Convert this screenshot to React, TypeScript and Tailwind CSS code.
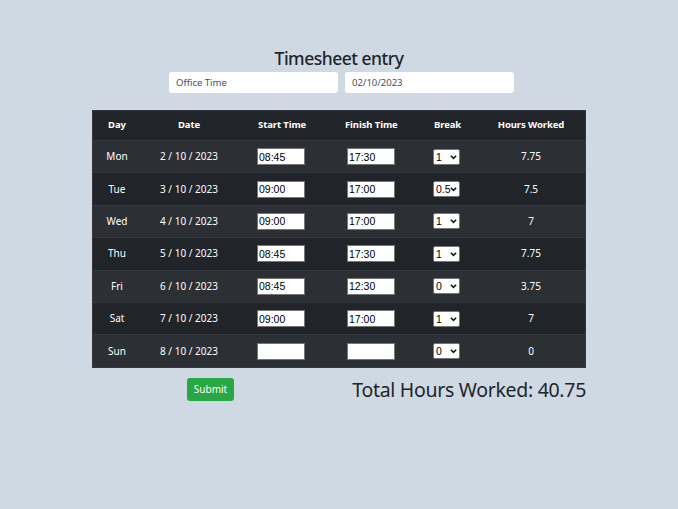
import { useState } from 'react'

interface DayRow {
  day: string
  date: string
  start: string
  finish: string
  brk: string
}

const initialRows: DayRow[] = [
  { day: 'Mon', date: '2 / 10 / 2023', start: '08:45', finish: '17:30', brk: '1' },
  { day: 'Tue', date: '3 / 10 / 2023', start: '09:00', finish: '17:00', brk: '0.5' },
  { day: 'Wed', date: '4 / 10 / 2023', start: '09:00', finish: '17:00', brk: '1' },
  { day: 'Thu', date: '5 / 10 / 2023', start: '08:45', finish: '17:30', brk: '1' },
  { day: 'Fri', date: '6 / 10 / 2023', start: '08:45', finish: '12:30', brk: '0' },
  { day: 'Sat', date: '7 / 10 / 2023', start: '09:00', finish: '17:00', brk: '1' },
  { day: 'Sun', date: '8 / 10 / 2023', start: '', finish: '', brk: '0' }
]

const toMinutes = (t: string): number | null => {
  const m = t.match(/^(\d{1,2}):(\d{2})$/)
  if (!m) return null
  return Number(m[1]) * 60 + Number(m[2])
}

const hoursFor = (row: DayRow): number => {
  const s = toMinutes(row.start)
  const f = toMinutes(row.finish)
  if (s === null || f === null) return 0
  return Math.max(0, (f - s) / 60 - Number(row.brk))
}

const gridCols = 'grid grid-cols-[48px_116px_84px_80px_68px_98px]'

export default function App() {
  const [rows, setRows] = useState<DayRow[]>(initialRows)
  const [name, setName] = useState('Office Time')
  const [weekOf, setWeekOf] = useState('02/10/2023')

  const update = (i: number, key: keyof DayRow, value: string) => {
    setRows(prev => prev.map((r, idx) => (idx === i ? { ...r, [key]: value } : r)))
  }

  const total = rows.reduce((sum, r) => sum + hoursFor(r), 0)

  return (
    <div className="min-h-[509px] bg-[#cfd9e3] font-['Noto_Sans',sans-serif] text-[#212529]">
      <div className="w-[494px] mx-auto pt-[45px]">
        <h1 className="text-center text-[17.5px] leading-[26px] font-medium tracking-[-0.5px]">Timesheet entry</h1>

        <div className="flex justify-center gap-[7px] mt-[1px] pl-[5px]">
          <input
            type="text"
            value={name}
            onChange={(e) => setName(e.target.value)}
            className="w-[169px] h-[21px] bg-white rounded-[3px] px-[7px] text-[9.5px] text-[#495057] outline-none"
          />
          <input
            type="text"
            value={weekOf}
            onChange={(e) => setWeekOf(e.target.value)}
            className="w-[169px] h-[21px] bg-white rounded-[3px] px-[7px] text-[9.5px] text-[#495057] outline-none"
          />
        </div>

        {/* Table */}
        <div className="mt-[17px] bg-[#212529] text-white text-[10px] border border-[#32383e]">
          <div className={`${gridCols} h-[29px] items-center font-bold text-[9.5px] tracking-[-0.1px]`}>
            <div className="text-center">Day</div>
            <div className="text-center pr-[20px]">Date</div>
            <div className="pl-[1px]">Start Time</div>
            <div className="pl-[4px]">Finish Time</div>
            <div className="pl-[13px]">Break</div>
            <div className="text-center pr-[14px]">Hours Worked</div>
          </div>

          {rows.map((row, i) => (
            <div
              key={row.day}
              className={`${gridCols} h-[32.4px] items-center border-t border-[#32383e] ${
                i % 2 === 0 ? 'bg-[#2c3034]' : 'bg-[#212529]'
              }`}
            >
              <div className="text-center">{row.day}</div>
              <div className="text-center pr-[20px]">{row.date}</div>
              <div>
                <input
                  type="text"
                  value={row.start}
                  onChange={(e) => update(i, 'start', e.target.value)}
                  className="w-[48px] h-[17px] bg-white text-black border border-[#767676] px-[1px] text-[10.5px] font-['Liberation_Sans',sans-serif] outline-none"
                />
              </div>
              <div className="pl-[6px]">
                <input
                  type="text"
                  value={row.finish}
                  onChange={(e) => update(i, 'finish', e.target.value)}
                  className="w-[48px] h-[17px] bg-white text-black border border-[#767676] px-[1px] text-[10.5px] font-['Liberation_Sans',sans-serif] outline-none"
                />
              </div>
              <div className="pl-[12px]">
                <div className="relative w-[27px] h-[16px]">
                  <select
                    value={row.brk}
                    onChange={(e) => update(i, 'brk', e.target.value)}
                    className="appearance-none w-[27px] h-[16px] bg-white text-black border border-[#767676] rounded-[2px] pl-[2px] text-[10.5px] leading-[14px] font-['Liberation_Sans',sans-serif] outline-none"
                  >
                    <option value="0">0</option>
                    <option value="0.5">0.5</option>
                    <option value="1">1</option>
                  </select>
                  <svg
                    className="pointer-events-none absolute right-[3px] top-[5px] w-[7px] h-[6px]"
                    viewBox="0 0 8 6"
                    fill="none"
                    stroke="#111"
                    strokeWidth="1.8"
                  >
                    <path d="M1 1.5l3 3 3-3" />
                  </svg>
                </div>
              </div>
              <div className="text-center pr-[14px]">{Number(hoursFor(row).toFixed(2))}</div>
            </div>
          ))}
        </div>

        <div className="flex items-center mt-[9px]">
          <div className="w-[240px] flex justify-center pr-[3px]">
            <button className="w-[47px] h-[23px] bg-[#28a745] hover:bg-[#218838] text-white text-[10px] rounded-[3px]">
              Submit
            </button>
          </div>
          <div className="flex-1 text-right whitespace-nowrap text-[19.5px] leading-[26px] tracking-[-0.3px]">
            Total Hours Worked: {Number(total.toFixed(2))}
          </div>
        </div>
      </div>
    </div>
  )
}
